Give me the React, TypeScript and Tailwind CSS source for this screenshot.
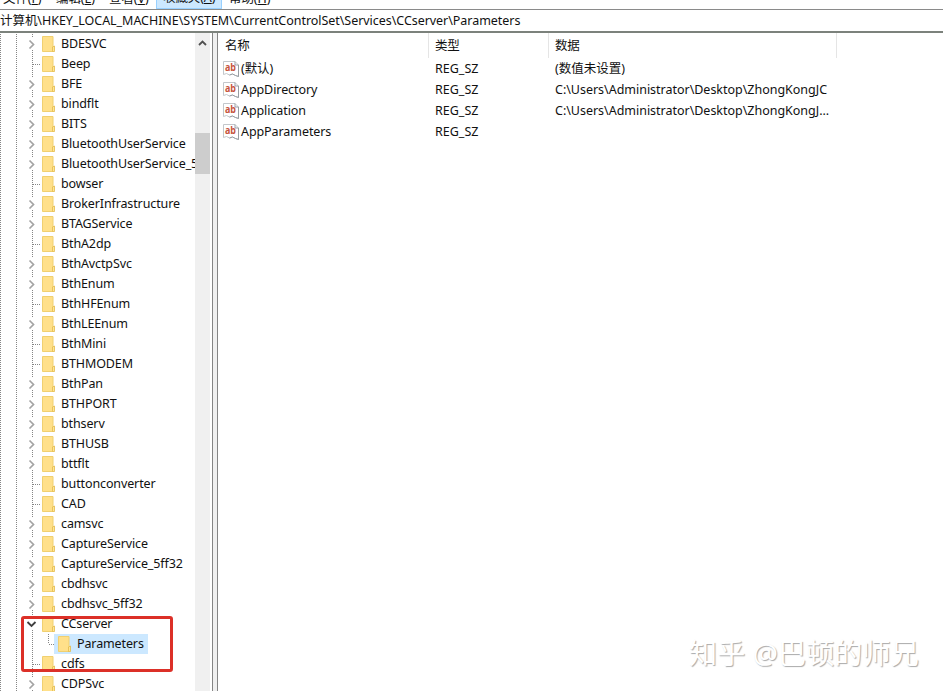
type Branch = "closed" | "open" | "leaf"

const KEYS: { name: string; branch: Branch; child?: boolean }[] = [
  { name: "BDESVC", branch: "closed" },
  { name: "Beep", branch: "leaf" },
  { name: "BFE", branch: "closed" },
  { name: "bindflt", branch: "closed" },
  { name: "BITS", branch: "closed" },
  { name: "BluetoothUserService", branch: "closed" },
  { name: "BluetoothUserService_5ff32", branch: "closed" },
  { name: "bowser", branch: "leaf" },
  { name: "BrokerInfrastructure", branch: "closed" },
  { name: "BTAGService", branch: "closed" },
  { name: "BthA2dp", branch: "leaf" },
  { name: "BthAvctpSvc", branch: "closed" },
  { name: "BthEnum", branch: "closed" },
  { name: "BthHFEnum", branch: "leaf" },
  { name: "BthLEEnum", branch: "closed" },
  { name: "BthMini", branch: "leaf" },
  { name: "BTHMODEM", branch: "leaf" },
  { name: "BthPan", branch: "closed" },
  { name: "BTHPORT", branch: "closed" },
  { name: "bthserv", branch: "closed" },
  { name: "BTHUSB", branch: "closed" },
  { name: "bttflt", branch: "closed" },
  { name: "buttonconverter", branch: "leaf" },
  { name: "CAD", branch: "leaf" },
  { name: "camsvc", branch: "closed" },
  { name: "CaptureService", branch: "closed" },
  { name: "CaptureService_5ff32", branch: "closed" },
  { name: "cbdhsvc", branch: "closed" },
  { name: "cbdhsvc_5ff32", branch: "closed" },
  { name: "CCserver", branch: "open" },
  { name: "Parameters", branch: "leaf", child: true },
  { name: "cdfs", branch: "leaf" },
  { name: "CDPSvc", branch: "closed" },
]

const VALUES = [
  { name: "(默认)", type: "REG_SZ", data: "(数值未设置)" },
  { name: "AppDirectory", type: "REG_SZ", data: "C:\\Users\\Administrator\\Desktop\\ZhongKongJC" },
  { name: "Application", type: "REG_SZ", data: "C:\\Users\\Administrator\\Desktop\\ZhongKongJ..." },
  { name: "AppParameters", type: "REG_SZ", data: "" },
]

const MENU = [
  { label: "文件", hotkey: "F", className: "w-[50px] pl-[3px]" },
  { label: "编辑", hotkey: "E", className: "w-[53px] pl-1.5" },
  { label: "查看", hotkey: "V", className: "w-[53px] pl-1.5" },
  { label: "收藏夹", hotkey: "A", className: "w-[66px] border border-[#99d1ff] bg-[#cce8ff] pl-1.5" },
  { label: "帮助", hotkey: "H", className: "w-[60px] pl-[7px]" },
]

function Folder() {
  return (
    <svg className="h-4 w-[13px] shrink-0" viewBox="0 0 13 16">
      <path d="M.5.5h10.5v15H.5z" fill="#ffe08a" stroke="#f0d070" />
      <path d="M10.5 15.5v-4.5l2-1v5.5z" fill="#ffe594" stroke="#e3bb4c" strokeWidth=".8" />
    </svg>
  )
}

// Dotted connector lines and the expand arrow in front of a key
function Guides({ branch, child }: { branch: Branch; child?: boolean }) {
  return (
    <svg className={child ? "h-5 w-[58px] shrink-0" : "h-5 w-[42px] shrink-0"} viewBox={child ? "0 0 58 20" : "0 0 42 20"}>
      <g stroke="#858585" strokeDasharray="1 1" fill="none">
        <path d="M.5 0v20M16.5 0v20" />
        {branch === "leaf" ? <path d="M32.5 0v20" /> : <path d="M32.5 0v4M32.5 16v4" />}
        {branch === "leaf" && !child && <path d="M33 10.5h7" />}
        {child && <path d="M48.5 0v10M49 10.5h7" />}
      </g>
      {branch === "closed" && <path d="m29.5 6.5 4 4-4 4" fill="none" stroke="#a3a3a3" strokeWidth="1.7" />}
      {branch === "open" && <path d="m27.5 8 4 4 4-4" fill="none" stroke="#404040" strokeWidth="1.8" />}
    </svg>
  )
}

function StringIcon() {
  return (
    <svg className="h-4 w-4 shrink-0" viewBox="0 0 16 16">
      <path d="M.5.5h11.5l3.5 3.5v11.5l-3-1-3-1.5-3 1-3-1.5-3 1z" fill="#fff" stroke="#c3c7cb" />
      <path d="M12 .5v3.5h3.5M15.5 4v11.5l-3-1-3-1.5-3 1" fill="none" stroke="#92989d" strokeWidth=".9" />
      <text
        x="2"
        y="9.8"
        fontFamily="Open Sans, sans-serif"
        fontSize="10"
        fontWeight="700"
        fill="#c6533a"
        textLength="11"
        lengthAdjust="spacingAndGlyphs"
      >
        ab
      </text>
    </svg>
  )
}

function Tree() {
  return (
    <div className="flex w-[213px] shrink-0 border-r border-[#858585]">
      <div className="w-[195px] overflow-hidden pt-px tracking-[-0.12px]">
        {KEYS.map((key) => (
          <div key={key.name} className="flex h-5 items-center whitespace-nowrap">
            <Guides branch={key.branch} child={key.child} />
            {key.child ? (
              <div className="-ml-1 flex h-5 items-center bg-[#cce8ff] pr-1 pl-1">
                <Folder />
                <span className="ml-1.5">{key.name}</span>
              </div>
            ) : (
              <>
                <Folder />
                <span className="ml-1.5">{key.name}</span>
              </>
            )}
          </div>
        ))}
      </div>
      <div className="flex w-[15px] flex-col bg-[#f0f0f0]">
        <svg className="h-[17px] w-[15px] shrink-0" viewBox="0 0 15 17">
          <path d="m4 12 3.5-3.5L11 12" fill="none" stroke="#505050" strokeWidth="1.8" />
        </svg>
        <div className="mt-[83px] h-[41px] bg-[#cdcdcd]" />
      </div>
    </div>
  )
}

function ValueList() {
  return (
    <div className="min-w-0 flex-1 border-l border-[#858585] bg-white">
      <div className="flex h-[25px] items-center">
        <div className="h-full w-[211px] border-r border-[#e5e5e5] pt-[3px] pl-[7px] tracking-[-0.2px]">名称</div>
        <div className="h-full w-[120px] border-r border-[#e5e5e5] pt-[3px] pl-1.5 tracking-[-0.2px]">类型</div>
        <div className="h-full w-[288px] border-r border-[#e5e5e5] pt-[3px] pl-1.5 tracking-[-0.2px]">数据</div>
      </div>
      {VALUES.map((value) => (
        <div key={value.name} className="flex h-[21px] items-center whitespace-nowrap">
          <div className="flex w-[217px] items-center pl-[5px]">
            <StringIcon />
            <span className="ml-0.5 tracking-[-0.08px]">{value.name}</span>
          </div>
          <div className="w-[120px]">{value.type}</div>
          <div className="tracking-[-0.02px]">{value.data}</div>
        </div>
      ))}
    </div>
  )
}

export default function App() {
  return (
    <div className="relative flex h-[691px] w-[943px] flex-col overflow-hidden bg-white font-['Noto_Sans','Noto_Sans_CJK_SC',sans-serif] text-[12.5px] leading-5 text-[#111]">
      <div className="flex h-[9px] shrink-0 items-end">
        {MENU.map((item) => (
          <div key={item.hotkey} className={`flex h-[22px] shrink-0 items-end whitespace-nowrap ${item.className}`}>
            <span className="tracking-[-0.1px]">
              {item.label}(<span className="underline">{item.hotkey}</span>)
            </span>
          </div>
        ))}
      </div>
      <div className="h-6 shrink-0 border-t border-b-2 border-t-[#8a8a8a] border-b-[#7c827c] leading-[22px] tracking-[-0.045px] whitespace-nowrap">
        计算机\HKEY_LOCAL_MACHINE\SYSTEM\CurrentControlSet\Services\CCserver\Parameters
      </div>
      <div className="flex min-h-0 flex-1 bg-[#f0f0f0]">
        <div className="mr-1 flex bg-white">
          <Tree />
        </div>
        <ValueList />
      </div>

      <div className="absolute top-[616px] left-[21px] h-[56px] w-[152px] rounded-[3px] border-3 border-[#dc3028]" />
      <div className="absolute top-[634px] left-[689px] text-[28px] leading-[38px] tracking-[0.15px] whitespace-nowrap text-white [text-shadow:1px_1px_1px_#aaa]">
        知乎 @巴顿的师兄
      </div>
    </div>
  )
}
